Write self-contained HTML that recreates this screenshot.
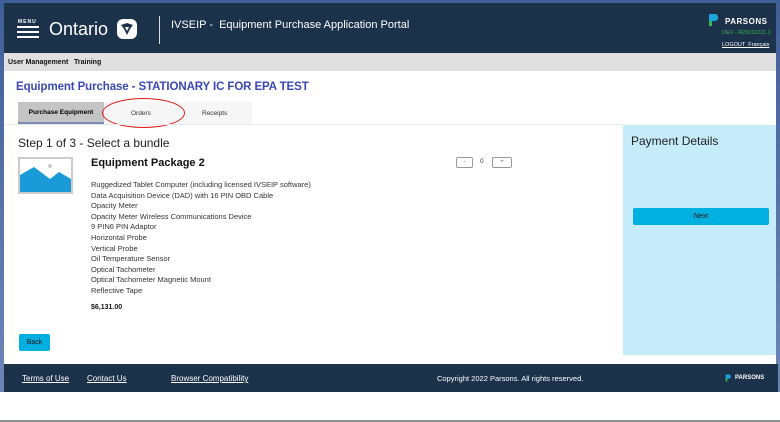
<!DOCTYPE html>
<html><head><style>
*{margin:0;padding:0;box-sizing:border-box}
body{width:780px;height:422px;position:relative;background:#fff;font-family:"Liberation Sans",sans-serif;overflow:hidden}
.a{position:absolute}
.frame{left:0;top:0;width:780px;height:392px;background:linear-gradient(#3f5f99,#6d86b8)}
.page{left:4px;top:3px;width:772px;height:389px;background:#fff}
.hdr{left:4px;top:3px;width:772px;height:50px;background:#1b324a}
.nav{left:4px;top:53px;width:772px;height:18px;background:#e0e0e0;font-size:7px;font-weight:bold;color:#111}
.ftr{left:4px;top:364px;width:774px;height:28px;background:#1b324a;color:#fff;font-size:8px}
.ftr span{position:absolute;top:10px;text-decoration:underline}
.li{font-size:7.5px;color:#333;line-height:10.6px}
</style></head><body>
<div class="a frame"></div>
<div class="a page"></div>
<div class="a hdr">
  <div class="a" style="left:14px;top:16px;color:#fff;font-size:5px;font-weight:bold;letter-spacing:1px">MENU</div>
  <div class="a" style="left:13px;top:23px;width:22px;height:2px;background:#fff"></div>
  <div class="a" style="left:13px;top:28px;width:22px;height:2px;background:#fff"></div>
  <div class="a" style="left:13px;top:33px;width:22px;height:2px;background:#fff"></div>
  <div class="a" style="left:45px;top:16px;color:#fff;font-size:18px">Ontario</div>
  <div class="a" style="left:113px;top:16px;width:20px;height:20px;background:#fff;border-radius:6px"><svg width="20" height="20" viewBox="0 0 20 20"><path d="M4 6 L10 4 L16 6 L13 10 L10 16 L7 10 Z" fill="#1b324a"/><path d="M8 8 L12 8 L10 12Z" fill="#fff"/></svg></div>
  <div class="a" style="left:155px;top:13px;width:1px;height:28px;background:#ddd"></div>
  <div class="a" style="left:167px;top:16px;color:#fff;font-size:11px">IVSEIP -&nbsp; Equipment Purchase Application Portal</div>
  <svg class="a" style="left:704px;top:10px" width="12" height="14" viewBox="0 0 12 14"><path d="M1 1 H8 A4 4 0 0 1 8 8 H4 V13 H1Z" fill="#1aa3dc"/><path d="M1 8 H4 V13 H1Z" fill="#3cb84a"/></svg>
  <div class="a" style="left:721px;top:14px;color:#fff;font-size:8px;font-weight:bold;letter-spacing:.5px">PARSONS</div>
  <div class="a" style="left:718px;top:27px;color:#3cb84a;font-size:5.5px">DEV - R20211221.1</div>
  <div class="a" style="left:718px;top:39px;color:#fff;font-size:5.5px;text-decoration:underline">LOGOUT&nbsp; Français</div>
</div>
<div class="a nav"><span class="a" style="left:4px;top:6px">User Management</span><span class="a" style="left:70px;top:6px">Training</span></div>
<div class="a" style="left:16px;top:81px;color:#3a48b4;font-size:11.5px;font-weight:bold;letter-spacing:-0.1px">Equipment Purchase - STATIONARY IC FOR EPA TEST</div>
<div class="a" style="left:18px;top:102px;width:234px;height:22px;background:#f6f6f6"></div>
<div class="a" style="left:18px;top:102px;width:86px;height:22px;background:#c4c4c4;border-bottom:2px solid #7a8bb5;font-size:6.5px;font-weight:bold;text-align:center;line-height:22px">Purchase Equipment</div>
<div class="a" style="left:131px;top:110px;font-size:6.5px;color:#333">Orders</div>
<div class="a" style="left:202px;top:110px;font-size:6.5px;color:#333">Receipts</div>
<div class="a" style="left:102px;top:98px;width:83px;height:30px;border:1.5px solid #e01818;border-radius:50%"></div>
<div class="a" style="left:4px;top:124px;width:619px;height:1px;background:#e8e8e8"></div>
<div class="a" style="left:18px;top:136px;font-size:12px;color:#222">Step 1 of 3 - Select a bundle</div>
<div class="a" style="left:18px;top:157px;width:55px;height:37px;background:#fff;border:2px solid #ccc"><svg width="51" height="33" viewBox="0 0 51 33"><circle cx="30" cy="7" r="2" fill="#ccc"/><path d="M0 16 L14 8 L30 20 L39 13 L51 20 V33 H0Z" fill="#1a9ad6"/></svg></div>
<div class="a" style="left:91px;top:157px;font-size:11px;font-weight:bold;color:#111">Equipment Package 2</div>
<div class="a" style="left:456px;top:157px;width:17px;height:11px;border:1px solid #999;border-radius:2px;font-size:6px;text-align:center;line-height:9px;color:#666">-</div>
<div class="a" style="left:480px;top:158px;font-size:6.5px;color:#333">0</div>
<div class="a" style="left:492px;top:157px;width:20px;height:11px;border:1px solid #999;border-radius:2px;font-size:6px;text-align:center;line-height:9px;color:#666">+</div>
<div class="a li" style="left:91px;top:180px">Ruggedized Tablet Computer (including licensed IVSEIP software)<br>Data Acquisition Device (DAD) with 16 PIN OBD Cable<br>Opacity Meter<br>Opacity Meter Wireless Communications Device<br>9 PIN6 PIN Adaptor<br>Horizontal Probe<br>Vertical Probe<br>Oil Temperature Sensor<br>Optical Tachometer<br>Optical Tachometer Magnetic Mount<br>Reflective Tape</div>
<div class="a" style="left:91px;top:304px;font-size:7px;font-weight:bold;color:#111">$6,131.00</div>
<div class="a" style="left:19px;top:334px;width:31px;height:17px;background:#00b0e0;border-radius:2px;font-size:7px;text-align:center;line-height:17px;color:#111">Back</div>
<div class="a" style="left:623px;top:125px;width:153px;height:230px;background:#c6ecf9"></div>
<div class="a" style="left:631px;top:134px;font-size:12px;color:#222">Payment Details</div>
<div class="a" style="left:633px;top:208px;width:136px;height:17px;background:#00b0e0;border-radius:2px;font-size:7px;text-align:center;line-height:17px;color:#111">Next</div>
<div class="a ftr">
  <span style="left:18px">Terms of Use</span><span style="left:83px">Contact Us</span><span style="left:167px">Browser Compatibility</span>
  <span style="left:433px;text-decoration:none;font-size:7.5px">Copyright 2022 Parsons. All rights reserved.</span>
  <svg class="a" style="left:721px;top:9px" width="7" height="10" viewBox="0 0 12 14"><path d="M1 1 H8 A4 4 0 0 1 8 8 H4 V13 H1Z" fill="#1aa3dc"/><path d="M1 8 H4 V13 H1Z" fill="#3cb84a"/></svg>
  <span style="left:731px;top:11px;font-size:6px;font-weight:bold;text-decoration:none">PARSONS</span>
</div>
<div class="a" style="left:0;top:420px;width:780px;height:2px;background:#8a9090"></div>
</body></html>
